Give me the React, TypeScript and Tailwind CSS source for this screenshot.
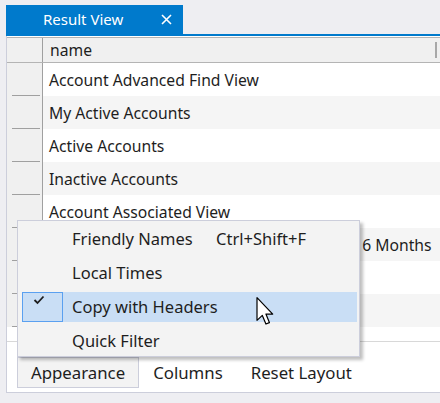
import React from "react";

// rows of the result grid
const rows = [
  "Account Advanced Find View",
  "My Active Accounts",
  "Active Accounts",
  "Inactive Accounts",
  "Account Associated View",
  "Accounts: Responded to Campaign in Last 6 Months",
  "Accounts Being Followed",
  "Accounts I Follow",
];

const menuItems = [
  { label: "Friendly Names", shortcut: "Ctrl+Shift+F", checked: false },
  { label: "Local Times", shortcut: "", checked: false },
  { label: "Copy with Headers", shortcut: "", checked: true },
  { label: "Quick Filter", shortcut: "", checked: false },
];

const App = () => {
  return (
    <div className="relative w-[440px] h-[403px] overflow-hidden bg-[#EEEEF2] text-[#1E1E1E] font-['Noto_Sans','Liberation_Sans',sans-serif] text-[15.7px]">
      {/* tab strip */}
      <div className="pt-[5px] pl-[6px]">
        <div className="flex h-[29px] w-[177px] items-center bg-[#007ACC] pl-[37px] pr-[11px] text-[15px] text-white">
          <span>Result View</span>
          <svg className="ml-auto" width="11" height="11" viewBox="0 0 11 11">
            <path d="M1 1 L10 10 M10 1 L1 10" stroke="white" strokeWidth="1.6" fill="none" />
          </svg>
        </div>
      </div>
      <div className="ml-[6px] h-[2px] bg-[#007ACC]" />

      {/* grid panel */}
      <div className="ml-[6px] flex h-[357px] flex-col border-b border-l border-[#CCCEDB] bg-white">
        {/* header */}
        <div className="mt-[1px] flex h-[26px] shrink-0 border-y border-[#B4B4B4] bg-[#F0F0F0]">
          <div className="w-[36px] shrink-0 border-r border-[#A0A0A0]" />
          <div className="flex w-[392px] shrink-0 items-center pl-[7px] pt-[1px]">name</div>
          <div className="my-[4px] w-[2px] shrink-0 bg-[#A8A8A8]" />
        </div>

        {rows.map((r, i) => (
          <div key={i} className="flex h-[33px] shrink-0">
            <div className="flex w-[36px] shrink-0 flex-col border-r border-[#A0A0A0] bg-[#F0F0F0]">
              <div className="mt-auto ml-[5px] mr-[2px] h-px bg-[#A0A0A0]" />
            </div>
            <div className={"flex flex-1 items-center whitespace-nowrap pl-[6px] pt-[2px] " + (i % 2 == 1 ? "bg-[#F5F5F5]" : "bg-white")}>
              {r}
            </div>
          </div>
        ))}

        <div className="h-[14px] shrink-0" />
        <div className="h-px shrink-0 bg-[#D8D8D8]" />

        {/* toolbar */}
        <div className="flex flex-1 items-start pl-[10px] pt-[15px] text-[16.8px]">
          <button className="flex h-[31px] items-center border border-[#CCCEDB] bg-[#F3F3F3] px-[13px]">Appearance</button>
          <button className="flex h-[31px] items-center border border-transparent px-[13px]">Columns</button>
          <button className="flex h-[31px] items-center border border-transparent px-[13px]">Reset Layout</button>
        </div>
      </div>

      {/* context menu over the grid */}
      <div className="absolute left-[17px] top-[220px] h-[137px] w-[343px] border border-[#CCCEDB] bg-[#F3F3F3] pt-[2px] text-[16.5px] shadow-[3px_3px_3px_rgba(0,0,0,0.25)]">
        {menuItems.map((m) => (
          <div key={m.label} className="h-[33px] pl-[4px] pr-[2px]">
            <div className={"relative mt-[1px] flex h-[30px] items-center " + (m.checked ? "bg-[#C9DEF5]" : "")}>
              {m.checked && (
                <div className="absolute left-0 top-0 h-[30px] w-[41px] border border-[#5AA0F0]">
                  <svg className="absolute left-[10px] top-[2px]" width="12" height="10" viewBox="0 0 12 10">
                    <path d="M1.5 5 L4.5 8 L10.5 1.5" stroke="#1E1E1E" strokeWidth="1.8" fill="none" />
                  </svg>
                </div>
              )}
              <span className="w-[144px] shrink-0 pl-[50px] box-content whitespace-nowrap">{m.label}</span>
              <span>{m.shortcut}</span>
            </div>
          </div>
        ))}
      </div>

      {/* mouse pointer */}
      <svg className="absolute left-[256px] top-[297px]" width="18" height="28" viewBox="0 0 13 21">
        <path d="M0.5 0.5 L0.5 17.5 L4.5 13.8 L7.2 20.3 L9.8 19.2 L7.2 12.8 L12.3 12.8 Z" fill="white" stroke="black" strokeWidth="0.9" strokeLinejoin="round" />
      </svg>
    </div>
  );
};

export default App;
